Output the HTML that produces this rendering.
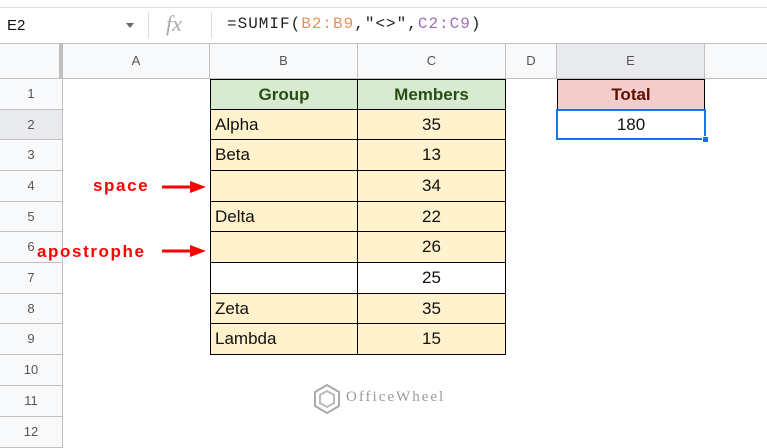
<!DOCTYPE html><html><head><style>
body{margin:0;width:767px;height:437px;overflow:hidden;background:#fff;font-family:"Liberation Sans",Arial,sans-serif;position:relative}
div{position:absolute;box-sizing:border-box}
.ch{top:44px;height:35px;background:#f8f9fa;border-right:1px solid #c0c0c0;border-bottom:1px solid #c0c0c0;color:#555;font-size:13px;text-align:center;line-height:34px}
.rh{left:0;width:63px;background:#f8f9fa;border-right:1px solid #c0c0c0;border-bottom:1px solid #c0c0c0;color:#555;font-size:13px;text-align:center}
.c{font-size:17px;color:#111;border:1px solid #000;margin:-1px 0 0 -1px}
.y{background:#fff2cc}
.arrow{color:#f00;font-weight:bold;font-size:17px;letter-spacing:1.6px}
</style></head><body>
<div style="top:0;left:0;width:767px;height:8px;border-bottom:1px solid #ddd"></div>
<div style="top:9px;left:0;width:767px;height:35px;border-bottom:1px solid #c0c0c0"></div>
<div style="top:17px;left:7px;font-size:15px;color:#111">E2</div>
<div style="top:23px;left:126px;width:0;height:0;border-left:4px solid transparent;border-right:4px solid transparent;border-top:5px solid #666"></div>
<div style="top:12px;left:148px;width:1px;height:26px;background:#ddd"></div>
<div style="top:11px;left:166px;font-family:'Liberation Serif',serif;font-style:italic;font-size:22px;color:#aaa">fx</div>
<div style="top:12px;left:211px;width:1px;height:26px;background:#ddd"></div>
<div style="top:15px;left:227px;font-family:'Liberation Mono',monospace;font-size:16px;color:#222;letter-spacing:1px">=SUMIF(<span style="color:#e8945a">B2:B9</span>,"&lt;&gt;",<span style="color:#9c6fb5">C2:C9</span>)</div>
<div class="ch" style="left:0;width:63px;border-right:4px solid #c0c0c0"></div>
<div class="ch" style="left:63px;width:147px">A</div>
<div class="ch" style="left:210px;width:148px">B</div>
<div class="ch" style="left:358px;width:148px">C</div>
<div class="ch" style="left:506px;width:51px">D</div>
<div class="ch" style="left:557px;width:148px;background:#e8eaed">E</div>
<div class="ch" style="left:705px;width:62px;border-right:none"></div>
<div class="rh" style="top:79px;height:31px;line-height:30px">1</div>
<div class="rh" style="top:110px;height:30px;line-height:30px;background:#e8eaed">2</div>
<div class="rh" style="top:140px;height:31px;line-height:30px">3</div>
<div class="rh" style="top:171px;height:31px;line-height:30px">4</div>
<div class="rh" style="top:202px;height:30px;line-height:30px">5</div>
<div class="rh" style="top:232px;height:31px;line-height:30px">6</div>
<div class="rh" style="top:263px;height:31px;line-height:30px">7</div>
<div class="rh" style="top:294px;height:30px;line-height:30px">8</div>
<div class="rh" style="top:324px;height:31px;line-height:30px">9</div>
<div class="rh" style="top:355px;height:31px;line-height:30px">10</div>
<div class="rh" style="top:386px;height:31px;line-height:30px">11</div>
<div class="rh" style="top:417px;height:31px;line-height:30px">12</div>
<div class="c" style="top:80px;left:211px;width:148px;height:31px;background:#d9ead3;color:#274e13;font-weight:bold;text-align:center;line-height:30px">Group</div>
<div class="c" style="top:80px;left:358px;width:149px;height:31px;background:#d9ead3;color:#274e13;font-weight:bold;text-align:center;line-height:30px">Members</div>
<div class="c y" style="top:110px;left:211px;width:148px;height:31px;line-height:30px;padding-left:4px">Alpha</div>
<div class="c y" style="top:110px;left:358px;width:149px;height:31px;line-height:30px;text-align:center">35</div>
<div class="c y" style="top:140px;left:211px;width:148px;height:32px;line-height:30px;padding-left:4px">Beta</div>
<div class="c y" style="top:140px;left:358px;width:149px;height:32px;line-height:30px;text-align:center">13</div>
<div class="c y" style="top:171px;left:211px;width:148px;height:32px;line-height:30px"></div>
<div class="c y" style="top:171px;left:358px;width:149px;height:32px;line-height:30px;text-align:center">34</div>
<div class="c y" style="top:202px;left:211px;width:148px;height:31px;line-height:30px;padding-left:4px">Delta</div>
<div class="c y" style="top:202px;left:358px;width:149px;height:31px;line-height:30px;text-align:center">22</div>
<div class="c y" style="top:232px;left:211px;width:148px;height:32px;line-height:30px"></div>
<div class="c y" style="top:232px;left:358px;width:149px;height:32px;line-height:30px;text-align:center">26</div>
<div class="c" style="top:263px;left:211px;width:148px;height:32px;line-height:30px"></div>
<div class="c" style="top:263px;left:358px;width:149px;height:32px;line-height:30px;text-align:center">25</div>
<div class="c y" style="top:294px;left:211px;width:148px;height:31px;line-height:30px;padding-left:4px">Zeta</div>
<div class="c y" style="top:294px;left:358px;width:149px;height:31px;line-height:30px;text-align:center">35</div>
<div class="c y" style="top:324px;left:211px;width:148px;height:32px;line-height:30px;padding-left:4px">Lambda</div>
<div class="c y" style="top:324px;left:358px;width:149px;height:32px;line-height:30px;text-align:center">15</div>
<div class="c" style="top:80px;left:558px;width:148px;height:31px;background:#f4cccc;color:#5b0f00;font-weight:bold;text-align:center;line-height:30px">Total</div>
<div style="top:109px;left:556px;width:150px;height:31px;border:2px solid #1a73e8;font-size:17px;text-align:center;line-height:27px;color:#111">180</div>
<div style="top:136px;left:702px;width:7px;height:7px;background:#1a73e8;border:1px solid #fff"></div>
<div class="arrow" style="top:176px;left:93px">space</div>
<div class="arrow" style="top:242px;left:37px">apostrophe</div>
<svg style="position:absolute;left:160px;top:178px" width="50" height="80"><path d="M2 9H34" stroke="#f00" stroke-width="3"/><path d="M30 3L46 9L30 15Z" fill="#f00"/><path d="M2 73H34" stroke="#f00" stroke-width="3"/><path d="M30 67L46 73L30 79Z" fill="#f00"/></svg>
<svg style="position:absolute;left:312px;top:382px" width="30" height="34"><path d="M15 3L27 10V24L15 31L3 24V10Z" fill="none" stroke="#aaa" stroke-width="2"/><path d="M15 9L22 13V21L15 25L8 21V13Z" fill="none" stroke="#bbb" stroke-width="2"/></svg>
<div style="top:389px;left:346px;font-family:'Liberation Serif',serif;font-size:15px;letter-spacing:2px;color:#999">OfficeWheel</div>
</body></html>
